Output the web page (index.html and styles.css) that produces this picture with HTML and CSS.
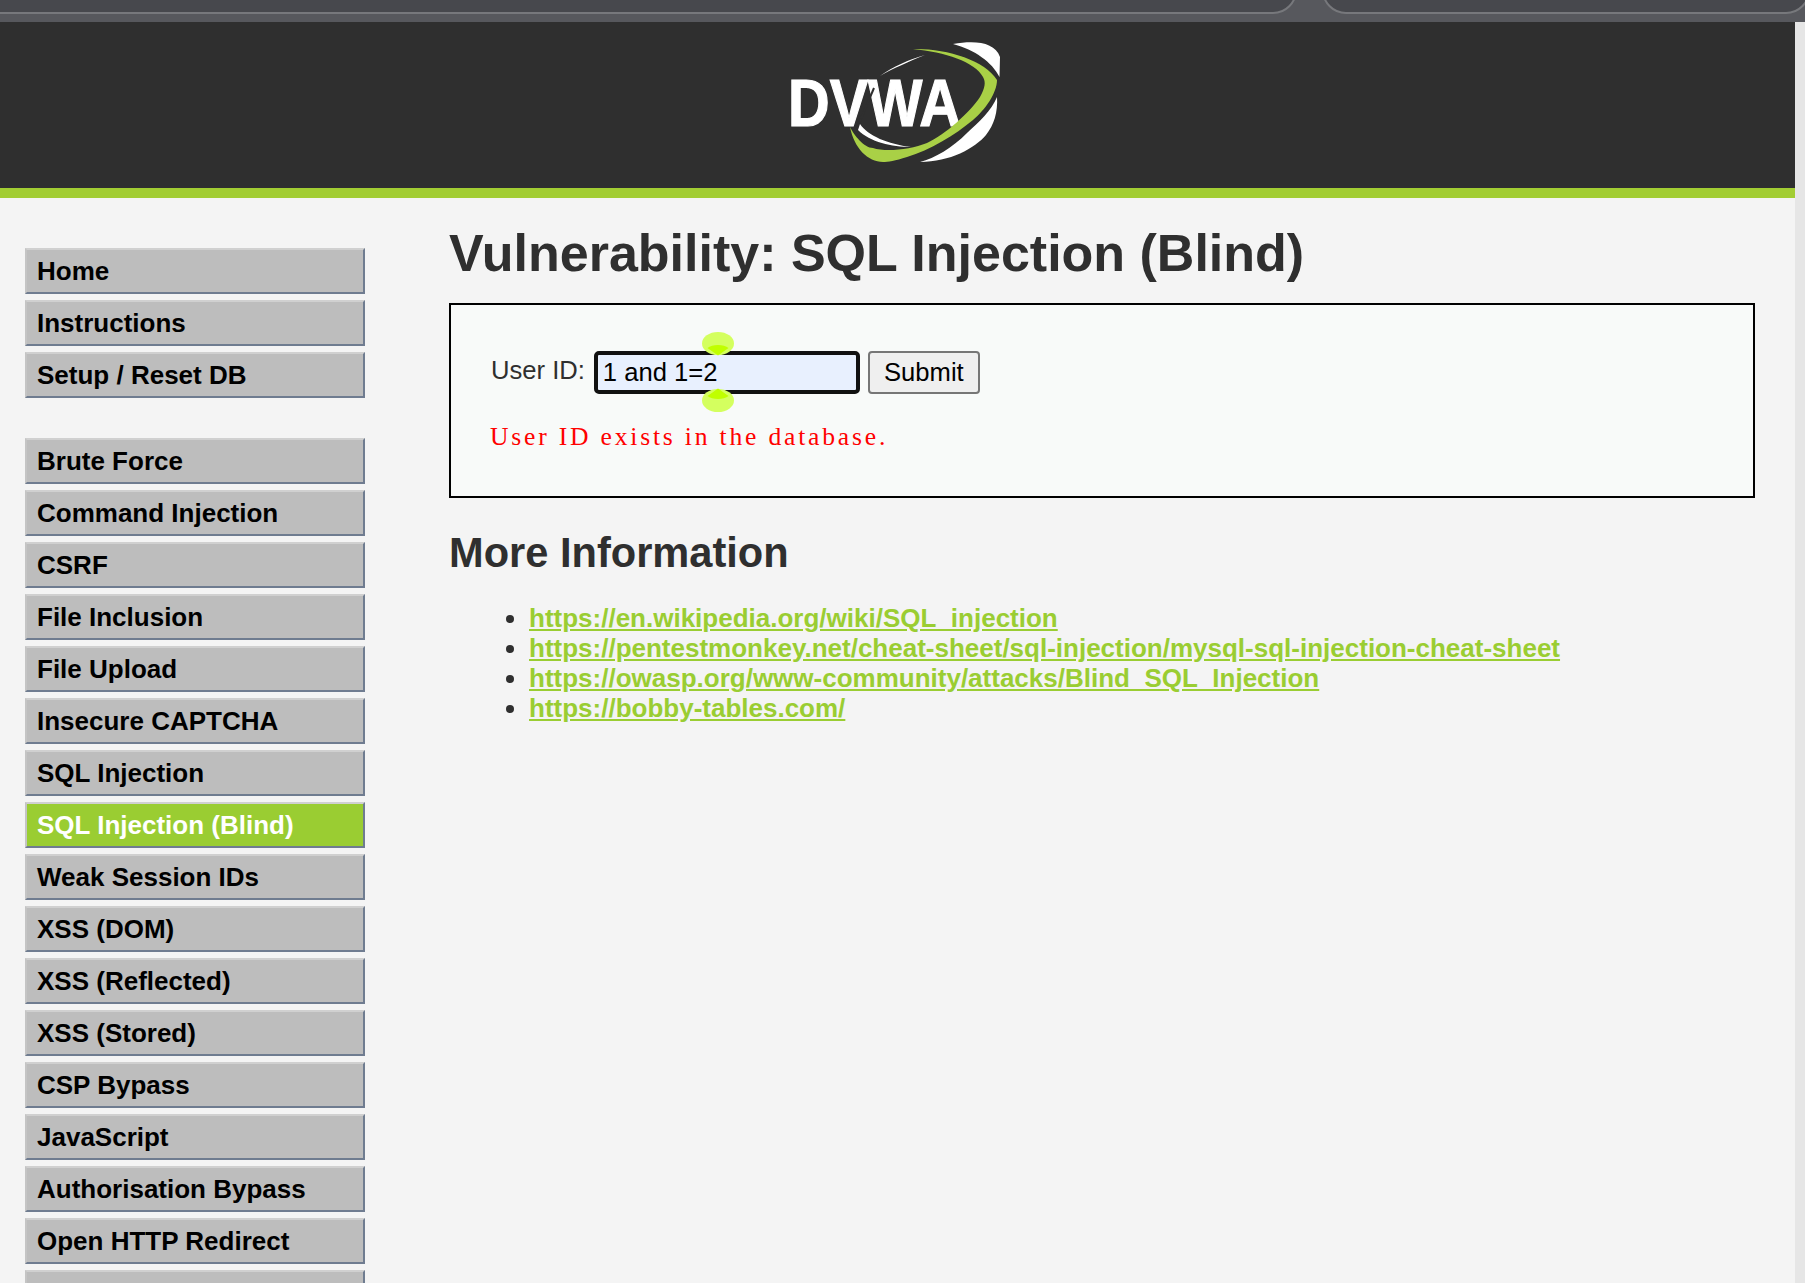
FILE: index.html
```html
<!DOCTYPE html>
<html lang="en">
<head>
    <meta charset="UTF-8">
    <title>Vulnerability: SQL Injection (Blind)</title>
    <link rel="stylesheet" href="styles.css">
</head>
<body>

    <div class="browser-bar">
        <div class="tab-edge tab-first"></div>
        <div class="tab-edge tab-second"></div>
    </div>

    <div class="page">
        <div class="scroll-track"></div>
        <div class="page-inner">
            <div class="header">
                <svg class="logo" viewBox="0 0 220 125" width="220" height="125">
                    <text class="logo-text" x="8" y="86" textLength="173" lengthAdjust="spacingAndGlyphs">DVWA</text>
                    <path class="logo-cut" d="M94 48 L77 88"/>
                    <path class="logo-white" d="M145 15 C130 19 112 27 100 36 C112 29 130 21 145 15 Z"/>
                    <path class="logo-white" d="M80 84 C88 96 108 104 131 107 C112 107 90 102 78 90 Z"/>
                    <path class="logo-green" d="M133 9 C165 8 205 20 217 40 C217 53 205 70 193 80 C175 95 150 110 127 117 C115 121 108 122 103 122 C88 122 74 108 70 87 C74 95 84 108 93 108 C105 112 130 110 147 103 C165 95 190 72 200 57 C205 48 206 42 203 37 C195 22 165 12 133 9 Z"/>
                    <path class="logo-white" d="M173 4 C195 0 215 2 220 17 L219.5 37 C212 22 195 10 173 4 Z"/>
                    <path class="logo-white" d="M217 57 C218 72 214 85 206 95 C195 108 170 122 140 122 C155 118 172 108 187 93 C198 83 212 70 217 57 Z"/>
                </svg>
            </div>
            <div class="main">
                <div class="menu">
                    <ul class="menu-group">
                        <li><a href="#">Home</a></li>
                        <li><a href="#">Instructions</a></li>
                        <li><a href="#">Setup / Reset DB</a></li>
                    </ul>
                    <ul class="menu-group">
                        <li><a href="#">Brute Force</a></li>
                        <li><a href="#">Command Injection</a></li>
                        <li><a href="#">CSRF</a></li>
                        <li><a href="#">File Inclusion</a></li>
                        <li><a href="#">File Upload</a></li>
                        <li><a href="#">Insecure CAPTCHA</a></li>
                        <li><a href="#">SQL Injection</a></li>
                        <li class="selected"><a href="#">SQL Injection (Blind)</a></li>
                        <li><a href="#">Weak Session IDs</a></li>
                        <li><a href="#">XSS (DOM)</a></li>
                        <li><a href="#">XSS (Reflected)</a></li>
                        <li><a href="#">XSS (Stored)</a></li>
                        <li><a href="#">CSP Bypass</a></li>
                        <li><a href="#">JavaScript</a></li>
                        <li><a href="#">Authorisation Bypass</a></li>
                        <li><a href="#">Open HTTP Redirect</a></li>
                        <li><a href="#">&nbsp;</a></li>
                    </ul>
                </div>
                <div class="content">
                    <h1>Vulnerability: SQL Injection (Blind)</h1>
                    <div class="vulnerable-code">
                        <form class="id-form">
                            <label for="userId">User ID:</label>
                            <span class="input-wrap">
                                <input id="userId" type="text" value="1 and 1=2">
                                <svg class="handle handle-top" viewBox="0 0 32 24" width="32" height="24">
                                    <ellipse cx="16" cy="11.5" rx="16" ry="11.5" fill="#d4ff5f"/>
                                    <path d="M5.5 16 C10 12 22 12 26.5 16 L16 23.5 Z" fill="#c0ff00"/>
                                </svg>
                                <svg class="handle handle-bottom" viewBox="0 0 32 24" width="32" height="24">
                                    <ellipse cx="16" cy="12.5" rx="16" ry="11.5" fill="#d4ff5f"/>
                                    <path d="M5.5 8 C10 12 22 12 26.5 8 L16 0.5 Z" fill="#c0ff00"/>
                                </svg>
                            </span>
                            <button type="button">Submit</button>
                        </form>
                        <pre class="result">User ID exists in the database.</pre>
                    </div>
                    <h2>More Information</h2>
                    <ul class="links">
                        <li><a href="#">https://en.wikipedia.org/wiki/SQL_injection</a></li>
                        <li><a href="#">https://pentestmonkey.net/cheat-sheet/sql-injection/mysql-sql-injection-cheat-sheet</a></li>
                        <li><a href="#">https://owasp.org/www-community/attacks/Blind_SQL_Injection</a></li>
                        <li><a href="#">https://bobby-tables.com/</a></li>
                    </ul>
                </div>
            </div>
        </div>
    </div>

</body>
</html>
```

FILE: styles.css
```css
html, body {
    margin: 0;
    padding: 0;
    height: 100%;
    overflow: hidden;
}
body {
    font-family: "Liberation Sans", Arial, sans-serif;
    background-color: #f4f4f4;
    color: #2f2f2f;
}
.browser-bar {
    position: relative;
    height: 22px;
    background-color: #57585d;
    overflow: hidden;
}
.tab-edge {
    position: absolute;
    top: -20px;
    height: 34px;
    box-sizing: border-box;
    background-color: #47484d;
    border: 2px solid #77787c;
    border-radius: 0 0 24px 24px;
}
.tab-first {
    left: -30px;
    width: 1327px;
}
.tab-second {
    left: 1322px;
    width: 488px;
}
.page {
    display: flex;
    flex-direction: row-reverse;
    height: calc(100% - 22px);
}
.scroll-track {
    width: 10px;
    background-color: #e6e6e6;
}
.page-inner {
    flex: 1;
    min-width: 0;
    overflow: hidden;
}
.header {
    display: flex;
    justify-content: center;
    box-sizing: border-box;
    height: 176px;
    padding: 18px 15px 0 0;
    background-color: #2f2f2f;
    border-bottom: 10px solid #a2cd33;
}
.logo {
    filter: blur(0.4px);
}
.logo-text {
    font-family: "Liberation Sans", sans-serif;
    font-weight: 700;
    font-size: 67px;
    fill: #fff;
    stroke: #fff;
    stroke-width: 1.2;
}
.logo-cut {
    stroke: #2f2f2f;
    stroke-width: 2;
    fill: none;
}
.logo-white {
    fill: #fff;
}
.logo-green {
    fill: #a9d046;
}
.main {
    display: flex;
}
.menu {
    width: 340px;
    margin-left: 25px;
    padding-top: 50px;
    flex-shrink: 0;
}
.menu-group {
    list-style: none;
    margin: 0 0 40px 0;
    padding: 0;
}
.menu-group li {
    margin-bottom: 6px;
}
.menu-group a {
    display: block;
    box-sizing: border-box;
    height: 46px;
    line-height: 43px;
    padding-left: 10px;
    font-size: 26px;
    font-weight: bold;
    color: #000;
    text-decoration: none;
    background-color: #bdbdbd;
    border: 2px solid;
    border-color: #d0d0d0 #6f7c90 #6f7c90 #c4c4c4;
}
.menu-group .selected a {
    background-color: #9acd32;
    color: #fff;
}
.content {
    flex: 1;
    min-width: 0;
    margin-left: 84px;
    margin-right: 40px;
}
h1 {
    margin: 25px 0 0 0;
    font-size: 52px;
    line-height: 60px;
    color: #2f2f2f;
}
.vulnerable-code {
    box-sizing: border-box;
    height: 195px;
    margin-top: 20px;
    padding: 45px 0 0 40px;
    background-color: #f8faf9;
    border: 2px solid #000;
}
.id-form {
    display: flex;
    align-items: center;
    height: 45px;
}
label {
    font-size: 25.6px;
    margin-right: 9px;
    margin-top: -4px;
}
.input-wrap {
    position: relative;
    display: block;
    margin-right: 8px;
}
input {
    display: block;
    box-sizing: border-box;
    width: 266px;
    height: 43px;
    padding: 0 5px;
    font-family: "Liberation Sans", Arial, sans-serif;
    font-size: 25.6px;
    color: #000;
    background-color: #e8f0fe;
    border: 4px solid #111;
    border-radius: 5px;
    outline: none;
}
button {
    box-sizing: border-box;
    width: 112px;
    height: 43px;
    padding: 0;
    font-family: "Liberation Sans", Arial, sans-serif;
    font-size: 25.6px;
    color: #000;
    background-color: #efefef;
    border: 2px solid #767676;
    border-radius: 4px;
}
.handle {
    position: absolute;
    left: 108px;
}
.handle-top {
    top: -19px;
}
.handle-bottom {
    bottom: -18px;
}
.result {
    margin: 27px 0 0 -1px;
    font-family: "Liberation Serif", serif;
    font-size: 25.6px;
    line-height: 30px;
    letter-spacing: 2.8px;
    color: #f00;
}
h2 {
    margin: 32px 0 0 0;
    font-size: 41.6px;
    line-height: 46px;
    color: #2f2f2f;
}
.links {
    margin: 27px 0 0 0;
    padding: 0 0 0 80px;
    font-size: 26px;
    line-height: 30px;
    font-weight: bold;
}
.links a {
    color: #9acd32;
}
```
